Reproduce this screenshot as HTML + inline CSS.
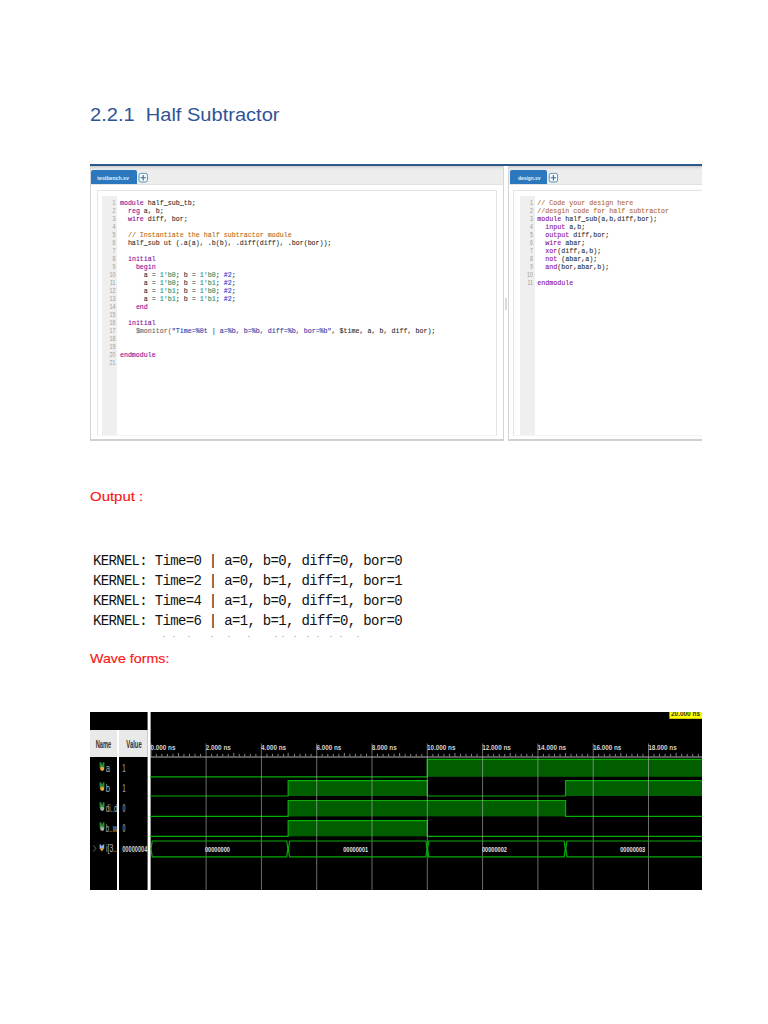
<!DOCTYPE html>
<html><head><meta charset="utf-8">
<style>
html,body{margin:0;padding:0;background:#fff;}
body{width:768px;height:1024px;position:relative;overflow:hidden;font-family:"Liberation Sans",sans-serif;}
.abs{position:absolute;}
#h{left:89.9px;top:103.8px;font-size:17.5px;color:#2f5496;white-space:pre;line-height:22px;transform-origin:0 0;transform:scaleX(1.146);}
.red{color:#fa1616;-webkit-text-stroke:0.15px currentColor;font-size:13px;line-height:16px;left:90px;white-space:pre;transform-origin:0 0;}
.k{font-family:"Liberation Mono",monospace;font-size:14px;letter-spacing:-0.68px;color:#111;left:93px;white-space:pre;line-height:20.07px;}
/* editor */
#ed{left:90px;top:164px;width:612px;height:278px;overflow:hidden;background:#fff;}
.code{font-family:"Liberation Mono",monospace;font-size:6.67px;line-height:8px;white-space:pre;color:#2e2e2e;-webkit-text-stroke:0.1px currentColor;}
.kw{color:#8a0a96;} .cm{color:#b56a1c;} .nu{color:#2a8a62;} .st{color:#2a3aa8;} .hs{color:#2a3ad0;} .g{color:#666;}
.ln{font-family:"Liberation Sans",sans-serif;font-size:6.6px;line-height:8px;color:#9c9c9c;text-align:right;white-space:pre;transform-origin:100% 0;transform:scaleX(0.8);}
/* wave */
#wv{left:90px;top:712px;width:612px;height:178px;background:#000;overflow:hidden;}
</style></head><body>
<div id="h" class="abs">2.2.1  Half Subtractor</div>

<div id="ed" class="abs">
  <div class="abs" style="left:0;top:0;width:612px;height:2.2px;background:#2a5a8c;"></div>
  <div class="abs" style="left:0;top:2.2px;width:414px;height:18px;background:linear-gradient(#c9c9c9 0,#e2e2e2 2px,#ededed 4px,#ededed 100%);"></div>
  <div class="abs" style="left:418px;top:2.2px;width:194px;height:18px;background:linear-gradient(#c9c9c9 0,#e2e2e2 2px,#ededed 4px,#ededed 100%);"></div>
  <div class="abs" style="left:0;top:2px;width:1px;height:274px;background:#d4d4d4;"></div>
  <div class="abs" style="left:413px;top:2px;width:1px;height:274px;background:#d4d4d4;"></div>
  <div class="abs" style="left:418px;top:2px;width:1px;height:274px;background:#d4d4d4;"></div>
  <div class="abs" style="left:0;top:20px;width:414px;height:1px;background:#e0e0e0;"></div>
  <div class="abs" style="left:418px;top:20px;width:194px;height:1px;background:#e0e0e0;"></div>
  <div class="abs" style="left:0;top:275px;width:414px;height:1.5px;background:#d0d0d0;"></div>
  <div class="abs" style="left:418px;top:275px;width:194px;height:1.5px;background:#d0d0d0;"></div>
  <!-- tabs -->
  <div class="abs" style="left:1.2px;top:6px;width:46px;height:14.2px;background:#2c78be;border-radius:2px 2px 0 0;"></div>
  <div class="abs" style="left:419.5px;top:6px;width:37.5px;height:14.2px;background:#2c78be;border-radius:2px 2px 0 0;"></div>
  <svg class="abs" style="left:0;top:0" width="612" height="24" viewBox="0 0 612 24">
    <text x="7.3" y="16.1" font-family="Liberation Sans" font-weight="bold" font-size="5.6" fill="#eaf2fa" textLength="31.5" lengthAdjust="spacingAndGlyphs">testbench.sv</text>
    <text x="428" y="16.1" font-family="Liberation Sans" font-weight="bold" font-size="5.6" fill="#eaf2fa" textLength="22.5" lengthAdjust="spacingAndGlyphs">design.sv</text>
    <g fill="#f6fafc" stroke="#5b93b4" stroke-width="1">
      <rect x="49" y="9.4" width="8.4" height="8.6" rx="1.8"/>
      <rect x="459.2" y="9.4" width="8.4" height="8.6" rx="1.8"/>
    </g>
    <path d="M53.2 11v5.4M50.5 13.7h5.4M463.4 11v5.4M460.7 13.7h5.4" stroke="#2f6f9a" stroke-width="1.1" fill="none"/>
  </svg>
  <!-- inner panels -->
  <div class="abs" style="left:6.5px;top:26px;width:400.5px;height:246px;border:1px solid #e4e4e4;border-bottom-color:#f4f4f4;box-sizing:border-box;"></div>
  <div class="abs" style="left:12px;top:32px;width:15.3px;height:238.5px;background:#efefef;"></div>
  <div class="abs" style="left:423px;top:26px;width:192px;height:246px;border:1px solid #e4e4e4;border-bottom-color:#f4f4f4;box-sizing:border-box;"></div>
  <div class="abs" style="left:430px;top:32px;width:14.6px;height:238.5px;background:#efefef;"></div>
  <div class="abs" style="left:414.6px;top:134px;width:2.2px;height:12px;background:#d9d9d9;"></div>
  <div class="abs ln" style="left:12px;top:34.9px;width:13.4px;">1
2
3
4
5
6
7
8
9
10
11
12
13
14
15
16
17
18
19
20
21</div>
  <div class="abs code" style="left:29.9px;top:34.7px;"><span class="kw">module</span> half_sub_tb;
  <span class="kw">reg</span> a, b;
  <span class="kw">wire</span> diff, bor;

  <span class="cm">// Instantiate the half subtractor module</span>
  half_sub ut (.a(a), .b(b), .diff(diff), .bor(bor));

  <span class="kw">initial</span>
    <span class="kw">begin</span>
      a = <span class="nu">1'b0</span>; b = <span class="nu">1'b0</span>; <span class="hs">#2</span>;
      a = <span class="nu">1'b0</span>; b = <span class="nu">1'b1</span>; <span class="hs">#2</span>;
      a = <span class="nu">1'b1</span>; b = <span class="nu">1'b0</span>; <span class="hs">#2</span>;
      a = <span class="nu">1'b1</span>; b = <span class="nu">1'b1</span>; <span class="hs">#2</span>;
    <span class="kw">end</span>

  <span class="kw">initial</span>
    <span class="g">$monitor(</span><span class="st">"Time=%0t | a=%b, b=%b, diff=%b, bor=%b"</span>, $time, a, b, diff, bor);


<span class="kw">endmodule</span>
</div>
  <div class="abs ln" style="left:430px;top:34.9px;width:13px;">1
2
3
4
5
6
7
8
9
10
11</div>
  <div class="abs code" style="left:447.3px;top:34.7px;"><span class="cm">// Code your design here</span>
<span class="cm">//desgin code for half subtractor</span>
<span class="kw">module</span> half_sub(a,b,diff,bor);
  <span class="kw">input</span> a,b;
  <span class="kw">output</span> diff,bor;
  <span class="kw">wire</span> abar;
  <span class="kw">xor</span>(diff,a,b);
  <span class="kw">not</span> (abar,a);
  <span class="kw">and</span>(bor,abar,b);

<span class="kw">endmodule</span>
</div>
</div>

<div class="abs red" style="top:489px;transform:scaleX(1.15);">Output :</div>
<div class="abs k" style="top:551px;">KERNEL: Time=0 | a=0, b=0, diff=0, bor=0
KERNEL: Time=2 | a=0, b=1, diff=1, bor=1
KERNEL: Time=4 | a=1, b=0, diff=1, bor=0
KERNEL: Time=6 | a=1, b=1, diff=0, bor=0</div>
<div class="abs" style="left:163px;top:636.2px;width:2.2px;height:1px;background:#c4c4c4;"></div><div class="abs" style="left:173px;top:636.2px;width:2.2px;height:1px;background:#c4c4c4;"></div><div class="abs" style="left:188px;top:636.2px;width:2.2px;height:1px;background:#c4c4c4;"></div><div class="abs" style="left:211px;top:636.2px;width:2.2px;height:1px;background:#c4c4c4;"></div><div class="abs" style="left:227.5px;top:636.2px;width:2.2px;height:1px;background:#c4c4c4;"></div><div class="abs" style="left:248px;top:636.2px;width:2.2px;height:1px;background:#c4c4c4;"></div><div class="abs" style="left:275px;top:636.2px;width:2.2px;height:1px;background:#c4c4c4;"></div><div class="abs" style="left:281.7px;top:636.2px;width:2.2px;height:1px;background:#c4c4c4;"></div><div class="abs" style="left:294px;top:636.2px;width:2.2px;height:1px;background:#c4c4c4;"></div><div class="abs" style="left:306.7px;top:636.2px;width:2.2px;height:1px;background:#c4c4c4;"></div><div class="abs" style="left:317px;top:636.2px;width:2.2px;height:1px;background:#c4c4c4;"></div><div class="abs" style="left:329.6px;top:636.2px;width:2.2px;height:1px;background:#c4c4c4;"></div><div class="abs" style="left:340px;top:636.2px;width:2.2px;height:1px;background:#c4c4c4;"></div><div class="abs" style="left:356.7px;top:636.2px;width:2.2px;height:1px;background:#c4c4c4;"></div>
<div class="abs red" style="top:651px;transform:scaleX(1.095);">Wave forms:</div>

<!--WAVE-->
<svg class="abs" style="left:90px;top:712px" width="612" height="178" viewBox="0 0 612 178" shape-rendering="auto">
<rect x="0" y="0" width="612" height="178" fill="#000"/>
<rect x="0" y="18" width="27" height="27" fill="#e9e9e9"/>
<rect x="29" y="18" width="28.69999999999999" height="27" fill="#e9e9e9"/>
<rect x="27" y="18" width="2" height="160" fill="#fff"/>
<rect x="57.6" y="0" width="3" height="178" fill="#fff"/>
<text x="5.7" y="35.8" font-family="Liberation Sans" font-weight="bold" font-size="11.5" fill="#333" textLength="15.5" lengthAdjust="spacingAndGlyphs">Name</text>
<text x="36.3" y="35.8" font-family="Liberation Sans" font-weight="bold" font-size="11.5" fill="#333" textLength="15.5" lengthAdjust="spacingAndGlyphs">Value</text>
<rect x="60.3" y="31.5" width="1" height="13.5" fill="#b8b8b8"/>
<rect x="60.6" y="44.5" width="551.4" height="1" fill="#b0b0b0"/>
<path d="M66.33 44.5v-2.6 M71.86 44.5v-2.6 M77.39 44.5v-2.6 M82.92 44.5v-2.6 M88.45 44.5v-3.6 M93.98 44.5v-2.6 M99.51 44.5v-2.6 M105.04 44.5v-2.6 M110.57 44.5v-2.6 M121.63 44.5v-2.6 M127.16 44.5v-2.6 M132.69 44.5v-2.6 M138.22 44.5v-2.6 M143.75 44.5v-3.6 M149.28 44.5v-2.6 M154.81 44.5v-2.6 M160.34 44.5v-2.6 M165.87 44.5v-2.6 M176.93 44.5v-2.6 M182.46 44.5v-2.6 M187.99 44.5v-2.6 M193.52 44.5v-2.6 M198.15 44.5v-3.6 M204.58 44.5v-2.6 M210.11 44.5v-2.6 M215.64 44.5v-2.6 M221.17 44.5v-2.6 M232.23 44.5v-2.6 M237.76 44.5v-2.6 M243.29 44.5v-2.6 M248.82 44.5v-2.6 M254.35 44.5v-3.6 M259.88 44.5v-2.6 M265.41 44.5v-2.6 M270.94 44.5v-2.6 M276.47 44.5v-2.6 M287.53 44.5v-2.6 M293.06 44.5v-2.6 M298.59 44.5v-2.6 M304.12 44.5v-2.6 M309.65 44.5v-3.6 M315.18 44.5v-2.6 M320.71 44.5v-2.6 M326.24 44.5v-2.6 M331.77 44.5v-2.6 M342.83 44.5v-2.6 M348.36 44.5v-2.6 M353.89 44.5v-2.6 M359.42 44.5v-2.6 M364.95 44.5v-3.6 M370.48 44.5v-2.6 M376.01 44.5v-2.6 M381.54 44.5v-2.6 M387.07 44.5v-2.6 M398.13 44.5v-2.6 M403.66 44.5v-2.6 M409.19 44.5v-2.6 M414.72 44.5v-2.6 M420.25 44.5v-3.6 M425.78 44.5v-2.6 M431.31 44.5v-2.6 M436.84 44.5v-2.6 M442.37 44.5v-2.6 M453.43 44.5v-2.6 M458.96 44.5v-2.6 M464.49 44.5v-2.6 M470.02 44.5v-2.6 M475.55 44.5v-3.6 M481.08 44.5v-2.6 M486.61 44.5v-2.6 M492.14 44.5v-2.6 M497.67 44.5v-2.6 M508.73 44.5v-2.6 M514.26 44.5v-2.6 M519.79 44.5v-2.6 M525.32 44.5v-2.6 M530.85 44.5v-3.6 M536.38 44.5v-2.6 M541.91 44.5v-2.6 M547.44 44.5v-2.6 M552.97 44.5v-2.6 M564.03 44.5v-2.6 M569.56 44.5v-2.6 M575.09 44.5v-2.6 M580.62 44.5v-2.6 M586.15 44.5v-3.6 M591.68 44.5v-2.6 M597.21 44.5v-2.6 M602.74 44.5v-2.6 M608.27 44.5v-2.6" stroke="#a4a4a4" stroke-width="0.8" fill="none"/>
<text x="60.5" y="38.2" font-family="Liberation Sans" font-weight="bold" font-size="8" fill="#d4d4d4" textLength="25" lengthAdjust="spacingAndGlyphs">0.000 ns</text>
<text x="115.8" y="38.2" font-family="Liberation Sans" font-weight="bold" font-size="8" fill="#d4d4d4" textLength="25" lengthAdjust="spacingAndGlyphs">2.000 ns</text>
<text x="171.1" y="38.2" font-family="Liberation Sans" font-weight="bold" font-size="8" fill="#d4d4d4" textLength="25" lengthAdjust="spacingAndGlyphs">4.000 ns</text>
<text x="226.39999999999998" y="38.2" font-family="Liberation Sans" font-weight="bold" font-size="8" fill="#d4d4d4" textLength="25" lengthAdjust="spacingAndGlyphs">6.000 ns</text>
<text x="281.7" y="38.2" font-family="Liberation Sans" font-weight="bold" font-size="8" fill="#d4d4d4" textLength="25" lengthAdjust="spacingAndGlyphs">8.000 ns</text>
<text x="337.0" y="38.2" font-family="Liberation Sans" font-weight="bold" font-size="8" fill="#d4d4d4" textLength="28.5" lengthAdjust="spacingAndGlyphs">10.000 ns</text>
<text x="392.3" y="38.2" font-family="Liberation Sans" font-weight="bold" font-size="8" fill="#d4d4d4" textLength="28.5" lengthAdjust="spacingAndGlyphs">12.000 ns</text>
<text x="447.59999999999997" y="38.2" font-family="Liberation Sans" font-weight="bold" font-size="8" fill="#d4d4d4" textLength="28.5" lengthAdjust="spacingAndGlyphs">14.000 ns</text>
<text x="502.9" y="38.2" font-family="Liberation Sans" font-weight="bold" font-size="8" fill="#d4d4d4" textLength="28.5" lengthAdjust="spacingAndGlyphs">16.000 ns</text>
<text x="558.2" y="38.2" font-family="Liberation Sans" font-weight="bold" font-size="8" fill="#d4d4d4" textLength="28.5" lengthAdjust="spacingAndGlyphs">18.000 ns</text>
<rect x="337.3" y="47.3" width="274.7" height="17.5" fill="#005e00"/>
<path d="M60.25 64.8 L337.3 64.8 L337.3 47.3 L612 47.3" stroke="#07ac07" stroke-width="1.2" fill="none"/>
<rect x="198.15" y="68.7" width="139.15" height="15.3" fill="#005e00"/>
<rect x="475.55" y="68.7" width="136.45" height="15.3" fill="#005e00"/>
<path d="M60.25 84.0 L198.15 84.0 L198.15 68.7 L337.3 68.7 L337.3 84.0 L475.55 84.0 L475.55 68.7 L612 68.7" stroke="#07ac07" stroke-width="1.2" fill="none"/>
<rect x="198.15" y="88.5" width="277.4" height="15.9" fill="#005e00"/>
<path d="M60.25 104.4 L198.15 104.4 L198.15 88.5 L475.55 88.5 L475.55 104.4 L612 104.4" stroke="#07ac07" stroke-width="1.2" fill="none"/>
<rect x="198.15" y="108.7" width="139.15" height="15.6" fill="#005e00"/>
<path d="M60.25 124.3 L198.15 124.3 L198.15 108.7 L337.3 108.7 L337.3 124.3 L612 124.3" stroke="#07ac07" stroke-width="1.2" fill="none"/>
<rect x="115.6" y="31.5" width="1" height="146.5" fill="#b0b0b0" fill-opacity="0.62"/>
<rect x="170.9" y="31.5" width="1" height="146.5" fill="#b0b0b0" fill-opacity="0.62"/>
<rect x="226.2" y="31.5" width="1" height="146.5" fill="#b0b0b0" fill-opacity="0.62"/>
<rect x="281.5" y="31.5" width="1" height="146.5" fill="#b0b0b0" fill-opacity="0.62"/>
<rect x="336.8" y="31.5" width="1" height="146.5" fill="#b0b0b0" fill-opacity="0.62"/>
<rect x="392.1" y="31.5" width="1" height="146.5" fill="#b0b0b0" fill-opacity="0.62"/>
<rect x="447.4" y="31.5" width="1" height="146.5" fill="#b0b0b0" fill-opacity="0.62"/>
<rect x="502.7" y="31.5" width="1" height="146.5" fill="#b0b0b0" fill-opacity="0.62"/>
<rect x="558.0" y="31.5" width="1" height="146.5" fill="#b0b0b0" fill-opacity="0.62"/>
<path d="M61.1 136.9 L62.2 129.0 L196.75 129.0 L197.85 136.9 L196.75 144.8 L62.2 144.8 Z M198.45 136.9 L199.54999999999998 129.0 L335.9 129.0 L337.0 136.9 L335.9 144.8 L199.54999999999998 144.8 Z M337.6 136.9 L338.70000000000005 129.0 L474.15 129.0 L475.25 136.9 L474.15 144.8 L338.70000000000005 144.8 Z M612 129.0 L476.95000000000005 129.0 L475.85 136.9 L476.95000000000005 144.8 L612 144.8" stroke="#07ac07" stroke-width="1.2" fill="none"/>
<text x="114.97999999999999" y="139.8" font-family="Liberation Sans" font-weight="bold" font-size="7" fill="#e0e0e0" textLength="25" lengthAdjust="spacingAndGlyphs">00000000</text>
<text x="253.23000000000002" y="139.8" font-family="Liberation Sans" font-weight="bold" font-size="7" fill="#e0e0e0" textLength="25" lengthAdjust="spacingAndGlyphs">00000001</text>
<text x="391.92" y="139.8" font-family="Liberation Sans" font-weight="bold" font-size="7" fill="#e0e0e0" textLength="25" lengthAdjust="spacingAndGlyphs">00000002</text>
<text x="530.17" y="139.8" font-family="Liberation Sans" font-weight="bold" font-size="7" fill="#e0e0e0" textLength="25" lengthAdjust="spacingAndGlyphs">00000003</text>
<rect x="579.4" y="0" width="32.60000000000002" height="6.8" fill="#ffff00"/>
<text x="581" y="4.2" font-family="Liberation Sans" font-weight="bold" font-size="7.6" fill="#333" textLength="29" lengthAdjust="spacingAndGlyphs">20.000 ns</text>
<path d="M9.6 50.3 h1.6 l0.9 2.6 l0.9 -2.6 h1.4 v5.6 h-4.8 z" fill="#2f8a3a"/>
<circle cx="12.2" cy="56.8" r="2.1" fill="#f2a436"/>
<text x="15.8" y="59.6" font-family="Liberation Sans" font-size="11.5" fill="#b4b4b4" textLength="4.2" lengthAdjust="spacingAndGlyphs">a</text>
<text x="32.4" y="59.6" font-family="Liberation Sans" font-weight="bold" font-size="11" fill="#868686" textLength="3" lengthAdjust="spacingAndGlyphs">1</text>
<path d="M9.6 70.3 h1.6 l0.9 2.6 l0.9 -2.6 h1.4 v5.6 h-4.8 z" fill="#2f8a3a"/>
<circle cx="12.2" cy="76.8" r="2.1" fill="#f2a436"/>
<text x="15.8" y="79.6" font-family="Liberation Sans" font-size="11.5" fill="#b4b4b4" textLength="4.2" lengthAdjust="spacingAndGlyphs">b</text>
<text x="32.4" y="79.6" font-family="Liberation Sans" font-weight="bold" font-size="11" fill="#868686" textLength="3" lengthAdjust="spacingAndGlyphs">1</text>
<path d="M9.6 90.3 h1.6 l0.9 2.6 l0.9 -2.6 h1.4 v5.6 h-4.8 z" fill="#2f8a3a"/>
<circle cx="12.2" cy="96.8" r="2.1" fill="#9fb09f"/>
<text x="15.8" y="99.6" font-family="Liberation Sans" font-size="11.5" fill="#b4b4b4" textLength="11.5" lengthAdjust="spacingAndGlyphs">di..d</text>
<text x="32.4" y="99.6" font-family="Liberation Sans" font-weight="bold" font-size="11" fill="#868686" textLength="3" lengthAdjust="spacingAndGlyphs">0</text>
<path d="M9.6 110.3 h1.6 l0.9 2.6 l0.9 -2.6 h1.4 v5.6 h-4.8 z" fill="#2f8a3a"/>
<circle cx="12.2" cy="116.8" r="2.1" fill="#9fb09f"/>
<text x="15.8" y="119.6" font-family="Liberation Sans" font-size="11.5" fill="#b4b4b4" textLength="11.5" lengthAdjust="spacingAndGlyphs">b..w</text>
<text x="32.4" y="119.6" font-family="Liberation Sans" font-weight="bold" font-size="11" fill="#868686" textLength="3" lengthAdjust="spacingAndGlyphs">0</text>
<path d="M3.4 133.4 l2.4 3 l-2.4 3" stroke="#707070" stroke-width="0.9" fill="none"/>
<path d="M9.6 132.4 h1.2 l1.1 1.8 l1.1 -1.8 h1.2 v4.4 h-4.6 z" fill="#8ab4e6"/>
<path d="M9.8 136.4 h4.2 l-2.1 3 z" fill="#f2a436"/>
<text x="16" y="140.2" font-family="Liberation Sans" font-size="10" fill="#b4b4b4" textLength="11" lengthAdjust="spacingAndGlyphs">i[3..</text>
<text x="32.2" y="139.8" font-family="Liberation Sans" font-weight="bold" font-size="9" fill="#cdcdcd" textLength="25.2" lengthAdjust="spacingAndGlyphs">00000004</text>
<rect x="27" y="45" width="2" height="133" fill="#fff"/>
</svg>
<!--/WAVE-->
</body></html>
